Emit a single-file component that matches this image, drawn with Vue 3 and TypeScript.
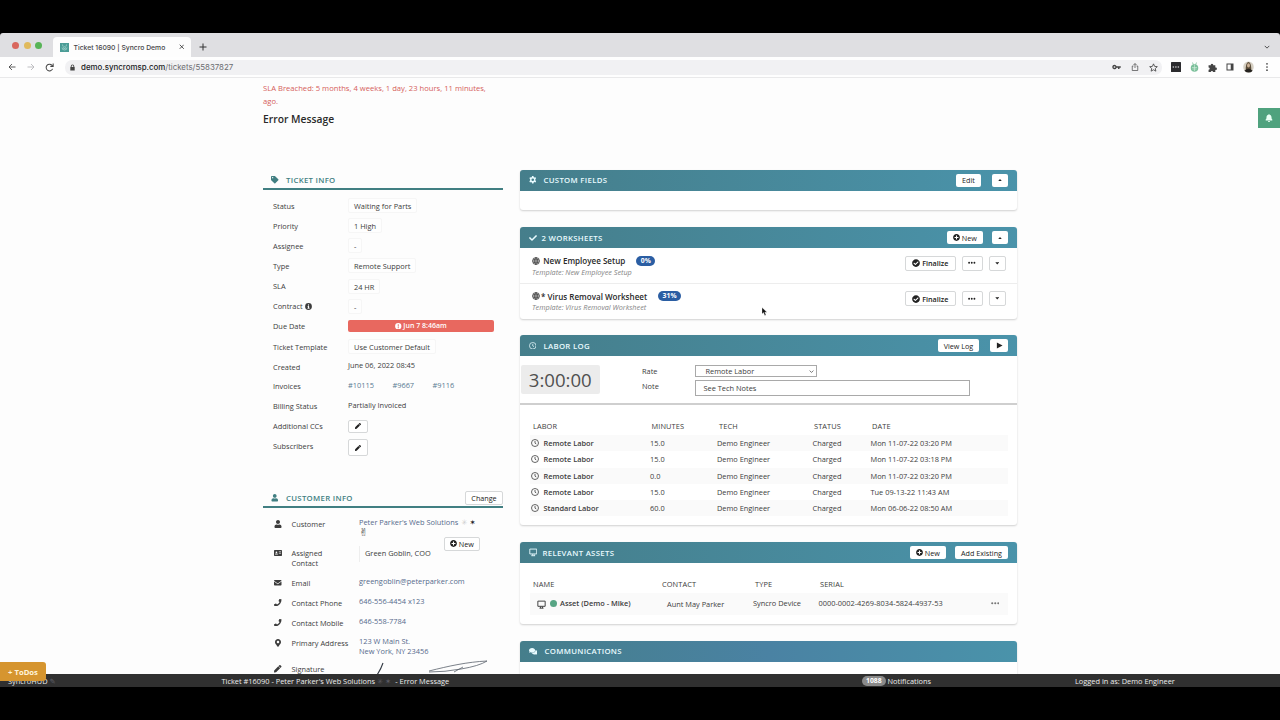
<script setup lang="ts">
import { h, type FunctionalComponent } from 'vue'

interface Glyph { box: string; d: string; line?: number }

const glyphs: Record<string, Glyph> = {
  user: { box: '0 0 448 512', d: 'M224 256c70.7 0 128-57.3 128-128S294.7 0 224 0 96 57.3 96 128s57.3 128 128 128zm89.6 32h-16.7c-22.2 10.2-46.9 16-72.9 16s-50.6-5.8-72.9-16h-16.7C60.2 288 0 348.2 0 422.4V464c0 26.5 21.5 48 48 48h352c26.5 0 48-21.5 48-48v-41.6c0-74.2-60.2-134.4-134.4-134.4z' },
  tag: { box: '0 0 512 512', d: 'M0 252V48C0 21 21 0 48 0h204a48 48 0 0 1 34 14l212 212c19 19 19 49 0 68L294 498c-19 19-49 19-68 0L14 286A48 48 0 0 1 0 252zM112 64c-27 0-48 21-48 48s21 48 48 48 48-21 48-48-21-48-48-48z' },
  check: { box: '0 0 512 512', d: 'M174 439L7 273c-10-10-10-26 0-36l37-36c10-10 26-10 36 0l112 112L432 73c10-10 26-10 36 0l36 36c10 10 10 26 0 36L210 439c-10 10-26 10-36 0z' },
  checkCircle: { box: '0 0 512 512', d: 'M504 256c0 137-111 248-248 248S8 393 8 256 119 8 256 8s248 111 248 248zM227 387l184-184c6-6 6-16 0-22l-22-23c-7-6-17-6-23 0L216 308l-70-70c-6-6-16-6-23 0l-22 23c-7 6-7 16 0 22l104 104c6 6 16 6 22 0z' },
  plusCircle: { box: '0 0 512 512', d: 'M256 8C119 8 8 119 8 256s111 248 248 248 248-111 248-248S393 8 256 8zm144 276c0 6.600-5.400 12-12 12h-92v92c0 6.600-5.400 12-12 12h-56c-6.600 0-12-5.400-12-12v-92h-92c-6.600 0-12-5.400-12-12v-56c0-6.600 5.400-12 12-12h92v-92c0-6.600 5.400-12 12-12h56c6.600 0 12 5.400 12 12v92h92c6.600 0 12 5.400 12 12v56z' },
  infoCircle: { box: '0 0 512 512', d: 'M256 8a248 248 0 1 0 0 496 248 248 0 0 0 0-496zM256 100a46 46 0 1 1 0 92 46 46 0 0 1 0-92zM190 220h110v136h32v56H184v-56h32v-80h-26z' },
  alertCircle: { box: '0 0 512 512', d: 'M256 8a248 248 0 1 0 0 496 248 248 0 0 0 0-496zM215 100h82l-12 190h-58zM256 320a45 45 0 1 1 0 90 45 45 0 0 1 0-90z' },
  card: { box: '0 0 576 512', d: 'M48 40h480q48 0 48 48v336q0 48-48 48H48q-48 0-48-48V88q0-48 48-48zM176 140a60 60 0 1 0 0 120 60 60 0 0 0 0-120zM70 370h212q0-80-60-86h-92q-60 6-60 86zM350 150v50h160v-50zM350 250v50h160v-50z' },
  envelope: { box: '0 0 512 512', d: 'M48 64h416q48 0 48 48v14L256 310 0 126v-14q0-48 48-48zM0 172l256 184 256-184v228q0 48-48 48H48q-48 0-48-48z' },
  phone: { box: '0 0 512 512', d: 'M493.400 24.600l-104-24c-11.300-2.600-22.900 3.300-27.500 13.900l-48 112c-4.200 9.800-1.400 21.300 6.900 28l60.600 49.600c-36 76.700-98.900 140.500-177.200 177.200l-49.600-60.600c-6.800-8.300-18.200-11.100-28-6.900l-112 48C3.900 366.500-2 378.100.600 389.400l24 104C27.100 504.200 36.700 512 48 512c256.100 0 464-207.500 464-464 0-11.200-7.700-20.900-18.600-23.400z' },
  pin: { box: '0 0 384 512', d: 'M172 502C27 291 0 269 0 192 0 86 86 0 192 0s192 86 192 192c0 77-27 99-172 310-10 13-30 13-40 0zM192 272c44 0 80-36 80-80s-36-80-80-80-80 36-80 80 36 80 80 80z' },
  pen: { box: '0 0 512 512', d: 'M291 93l128 128-278 278-114 13C11 514-2 501 0 485l13-114L291 93zm207-19l-60-60c-19-19-49-19-68 0l-57 57 128 128 57-57c19-19 19-49 0-68z' },
  bell: { box: '0 0 448 512', d: 'M224 512c35 0 64-29 64-64H160c0 35 29 64 64 64zm215-150c-19-20-55-52-55-154 0-78-54-140-128-155V32c0-18-14-32-32-32s-32 14-32 32v21C118 68 64 130 64 208c0 102-36 134-55 154-6 7-9 14-9 22 0 16 13 32 32 32h384c19 0 32-16 32-32 0-8-3-15-9-22z' },
  comments: { box: '0 0 576 512', d: 'M416 192c0-88.400-93.100-160-208-160S0 103.600 0 192c0 34.300 14.100 65.900 38 92-13.400 30.200-35.500 54.200-35.800 54.500-2.200 2.300-2.800 5.700-1.500 8.700S4.800 352 8 352c36.600 0 66.900-12.300 88.700-25 32.200 15.700 70.300 25 111.300 25 114.900 0 208-71.600 208-160zm122 220c23.900-26 38-57.700 38-92 0-66.900-53.500-124.200-129.300-148.100.900 6.600 1.300 13.300 1.300 20.100 0 105.900-107.700 192-240 192-10.800 0-21.300-.800-31.700-1.900C207.800 439.600 281.800 480 368 480c41 0 79.100-9.200 111.300-25 21.800 12.700 52.100 25 88.700 25 3.200 0 6.100-1.900 7.300-4.800 1.300-2.900.700-6.300-1.500-8.700-.300-.300-22.400-24.200-35.800-54.500z' },
  gear: { box: '0 0 16 16', d: 'M6.500 0h3l.5 2.200 1.600.9 2.200-.7 1.500 2.600-1.700 1.600v2.800l1.700 1.600-1.500 2.600-2.200-.7-1.600.9-.5 2.200h-3L6 13.800l-1.600-.9-2.200.7L.700 11l1.700-1.600V6.600L.700 5l1.500-2.600 2.200.7L6 2.200zM8 5.200a2.800 2.800 0 1 0 0 5.600 2.800 2.800 0 0 0 0-5.600z' },
  clock: { box: '0 0 16 16', d: 'M8 1a7 7 0 1 0 0 14A7 7 0 0 0 8 1zM8 4v4.300l2.600 1.600', line: 1.6 },
  desktop: { box: '0 0 16 16', d: 'M1.500 2h13v9.200h-13zM6.500 11.500l-.6 3M9.500 11.500l.6 3M4.500 14.500h7', line: 1.7 },
  globe: { box: '0 0 16 16', d: 'M8 1a7 7 0 1 0 0 14A7 7 0 0 0 8 1zM8 1v14M1 8h14M2 4.600h12M2 11.400h12M8 1C3.500 4.500 3.500 11.500 8 15M8 1c4.500 3.500 4.500 10.500 0 14', line: 1.3 },
  play: { box: '0 0 16 16', d: 'M2 1v14l13-7z' },
  up: { box: '0 0 16 16', d: 'M1 12h14L8 4z' },
  down: { box: '0 0 16 16', d: 'M1 4h14l-7 8z' },
  dots: { box: '0 0 16 16', d: 'M2.300 6a2 2 0 1 0 0 4 2 2 0 0 0 0-4zM8 6a2 2 0 1 0 0 4 2 2 0 0 0 0-4zM13.700 6a2 2 0 1 0 0 4 2 2 0 0 0 0-4z' },
  back: { box: '0 0 16 16', d: 'M15 8H2M8 2L2 8l6 6', line: 1.7 },
  forward: { box: '0 0 16 16', d: 'M1 8h13M8 2l6 6-6 6', line: 1.7 },
  reload: { box: '0 0 16 16', d: 'M13.500 10.500A6 6 0 1 1 12.500 4l2 2M14.500 1v5h-5', line: 1.8 },
  lock: { box: '0 0 16 16', d: 'M3 7h1V5a4 4 0 0 1 8 0v2h1v8H3zM6 7h4V5a2 2 0 0 0-4 0z' },
  close: { box: '0 0 16 16', d: 'M2 2l12 12M14 2L2 14', line: 2.4 },
  plus: { box: '0 0 16 16', d: 'M8 1v14M1 8h14', line: 2 },
  chevron: { box: '0 0 16 16', d: 'M2 5l6 6 6-6', line: 2.200 },
  key: { box: '0 0 18 12', d: 'M5 1.500a4.500 4.500 0 1 0 4.200 6H12V10h3V7.500h2.500v-3H9.200A4.500 4.500 0 0 0 5 1.500zM5 4.300a1.700 1.700 0 1 1 0 3.400 1.700 1.700 0 0 1 0-3.400z' },
  share: { box: '0 0 16 16', d: 'M5 6H2.500v9h11V6H11M8 10V1.500M5 4l3-3 3 3', line: 1.4 },
  star: { box: '0 0 16 16', d: 'M8 1.500l2 4.500 4.800.5-3.600 3.200 1 4.800L8 12l-4.200 2.500 1-4.800L1.200 6.500 6 6z', line: 1.5 },
  puzzle: { box: '0 0 16 16', d: 'M1 4h4a2.200 2.200 0 1 1 4.200 0H13v4a2.200 2.200 0 1 1 0 4.200V16H9a2 2 0 0 0-4 0H1v-4a2.100 2.100 0 1 0 0-4.200z' },
  side: { box: '0 0 16 16', d: 'M1 1h14v14H1zM3 3v10h6.500V3z' },
  kebab: { box: '0 0 16 16', d: 'M8 0a1.700 1.700 0 1 0 0 3.400A1.700 1.700 0 0 0 8 0zM8 6.300a1.700 1.700 0 1 0 0 3.400 1.700 1.700 0 0 0 0-3.400zM8 12.600a1.700 1.700 0 1 0 0 3.400 1.700 1.700 0 0 0 0-3.400z' },
}

const Icon: FunctionalComponent<{ name: string; size?: number }> = (props) => {
  const g = glyphs[props.name]
  const s = props.size ?? 8
  return h('svg', { viewBox: g.box, width: s, height: s, style: { display: 'block', flex: 'none' } }, [
    h('path', g.line
      ? { d: g.d, fill: 'none', stroke: 'currentColor', 'stroke-width': g.line }
      : { d: g.d, fill: 'currentColor', 'fill-rule': 'evenodd' }),
  ])
}
Icon.props = ['name', 'size']

interface InfoRow { label: string; value?: string; kind: 'pill' | 'text' | 'due' | 'links' | 'edit'; links?: string[]; tall?: boolean }
const ticketRows: InfoRow[] = [
  { label: 'Status', value: 'Waiting for Parts', kind: 'pill' },
  { label: 'Priority', value: '1 High', kind: 'pill' },
  { label: 'Assignee', value: '-', kind: 'pill' },
  { label: 'Type', value: 'Remote Support', kind: 'pill' },
  { label: 'SLA', value: '24 HR', kind: 'pill' },
  { label: 'Contract', value: '-', kind: 'pill' },
  { label: 'Due Date', value: 'Jun 7 8:46am', kind: 'due' },
  { label: 'Ticket Template', value: 'Use Customer Default', kind: 'pill' },
  { label: 'Created', value: 'June 06, 2022 08:45', kind: 'text' },
  { label: 'Invoices', kind: 'links', links: ['#10115', '#9667', '#9116'] },
  { label: 'Billing Status', value: 'Partially Invoiced', kind: 'text' },
  { label: 'Additional CCs', kind: 'edit' },
  { label: 'Subscribers', kind: 'edit', tall: true },
]
const contactRows = [
  { icon: 'envelope', label: 'Email', value: 'greengoblin@peterparker.com' },
  { icon: 'phone', label: 'Contact Phone', value: '646-556-4454 x123' },
  { icon: 'phone', label: 'Contact Mobile', value: '646-558-7784' },
]
const worksheets = [
  { name: 'New Employee Setup', percent: '0%', template: 'New Employee Setup' },
  { name: '* Virus Removal Worksheet', percent: '31%', template: 'Virus Removal Worksheet' },
]
const labor = [
  ['Remote Labor', '15.0', 'Mon 11-07-22 03:20 PM'],
  ['Remote Labor', '15.0', 'Mon 11-07-22 03:18 PM'],
  ['Remote Labor', '0.0', 'Mon 11-07-22 03:20 PM'],
  ['Remote Labor', '15.0', 'Tue 09-13-22 11:43 AM'],
  ['Standard Labor', '60.0', 'Mon 06-06-22 08:50 AM'],
]
</script>

<template>
  <div class="screen">
    <div class="tabs">
      <i class="light red" /><i class="light amber" /><i class="light green" />
      <div class="tab">
        <svg class="favicon" viewBox="0 0 18 18"><rect width="18" height="18" fill="#4b9c96" /><path d="M5 3l1 4M13 3l-1 4M4 9a5 5 0 1 0 10 0M6 9q3-3 6 0M7 11h4" fill="none" stroke="#a9d8d0" stroke-width="1.500" /></svg>
        <span class="tab-title">Ticket 16090 | Syncro Demo</span>
        <Icon name="close" :size="5.500" />
      </div>
      <Icon class="new-tab" name="plus" :size="8" />
      <Icon class="tab-menu" name="chevron" :size="6" />
    </div>
    <div class="toolbar">
      <Icon name="back" :size="8" />
      <Icon class="dim" name="forward" :size="8" />
      <Icon name="reload" :size="9" />
      <div class="address">
        <Icon name="lock" :size="7" />
        <span class="url">demo.syncromsp.com<em>/tickets/55837827</em></span>
        <svg class="key" viewBox="0 0 18 12" width="9" height="6"><path :d="glyphs.key.d" fill="currentColor" fill-rule="evenodd" /></svg>
        <Icon name="share" :size="8" />
        <Icon name="star" :size="9" />
      </div>
      <div class="extensions">
        <svg viewBox="0 0 18 18" width="10" height="10"><rect width="18" height="18" rx="1" fill="#2b2b2e" /><path d="M3 9h2.500M7.500 9H10M12 9h2.500" stroke="#fff" stroke-width="2.200" /></svg>
        <svg viewBox="0 0 18 20" width="9" height="10"><path d="M5 1l2 5M13 1l-2 5" stroke="#7cc09b" stroke-width="1.600" /><circle cx="9" cy="12" r="7.500" fill="#7cc09b" /><path d="M4 11h10M5 14h8M9 6v12" stroke="#d5efdf" stroke-width="1.200" /></svg>
        <Icon name="puzzle" :size="9" />
        <Icon name="side" :size="8" />
        <svg viewBox="0 0 24 26" width="11" height="12"><ellipse cx="12" cy="13" rx="11.500" ry="12" fill="#d6d0c4" /><path d="M6 24Q5 3 12 2q7 1 6 22z" fill="#5a4c38" /><ellipse cx="12" cy="9.500" rx="3.200" ry="4.500" fill="#cdb297" /><path d="M3 21q9-8 18 0-8 8-18 0z" fill="#24221f" /></svg>
        <Icon name="kebab" :size="8" />
      </div>
    </div>

    <main class="page">
      <div class="alerts"><Icon name="bell" :size="8" /></div>
      <div class="heading">
        <p class="breach">SLA Breached: 5 months, 4 weeks, 1 day, 23 hours, 11 minutes, ago.</p>
        <h1>Error Message</h1>
      </div>
      <div class="columns">
        <aside>
          <header class="side-head"><Icon name="tag" :size="7.500" /><h2>TICKET INFO</h2></header>
          <div class="ticket-rows">
            <div v-for="row in ticketRows" :key="row.label" class="info" :class="{ tall: row.tall }">
              <label>{{ row.label }}<Icon v-if="row.label === 'Contract'" name="infoCircle" :size="7" /></label>
              <span v-if="row.kind === 'pill'" class="pill-value">{{ row.value }}</span>
              <span v-else-if="row.kind === 'due'" class="due-value"><Icon name="alertCircle" :size="6.500" />{{ row.value }}</span>
              <span v-else-if="row.kind === 'text'" class="plain">{{ row.value }}</span>
              <span v-else-if="row.kind === 'links'" class="plain links"><a v-for="l in row.links" :key="l">{{ l }}</a></span>
              <button v-else class="btn outline edit"><Icon name="pen" :size="6" /></button>
            </div>
          </div>

          <header class="side-head customer-head"><Icon name="user" :size="7.500" /><h2>CUSTOMER INFO</h2><button class="btn outline change">Change</button></header>
          <div class="contact-rows">
            <div class="contact first">
              <Icon name="user" :size="8" /><label>Customer</label>
              <div class="company"><a>Peter Parker's Web Solutions</a><i class="spark">✳</i><i class="dark-spark">✶</i><br><b>✌</b></div>
            </div>
            <div class="contact assigned">
              <Icon name="card" :size="8" /><label>Assigned<br>Contact</label>
              <span class="assignee">Green Goblin, COO</span>
              <button class="btn outline add-contact"><Icon name="plusCircle" :size="7" />New</button>
            </div>
            <div v-for="c in contactRows" :key="c.label" class="contact">
              <Icon :name="c.icon" :size="7.500" /><label>{{ c.label }}</label><a>{{ c.value }}</a>
            </div>
            <div class="contact address-row">
              <Icon name="pin" :size="8" /><label>Primary Address</label><a>123 W Main St.<br>New York, NY 23456</a>
            </div>
            <div class="contact sign">
              <Icon name="pen" :size="7.500" /><label>Signature</label>
              <svg class="scrawl" viewBox="0 0 130 22" width="130" height="22"><path d="M24 7q-2 6-6 12" fill="none" stroke="#333a44" stroke-width="1.100" /><path d="M70 15C90 10 108 6 128 5q-8 5-26 8-16 3-32 3M104 11l-9 5" fill="none" stroke="#59616b" stroke-width=".8" /></svg>
            </div>
          </div>
        </aside>

        <section class="panels">
          <article class="panel custom">
            <header><Icon name="gear" :size="7.500" /><h2>CUSTOM FIELDS</h2><button class="btn w25">Edit</button><button class="btn toggle"><Icon name="up" :size="4" /></button></header>
          </article>

          <article class="panel sheets">
            <header><Icon name="check" :size="8" /><h2 class="near">2 WORKSHEETS</h2><button class="btn w36"><Icon name="plusCircle" :size="7" />New</button><button class="btn toggle short"><Icon name="up" :size="4" /></button></header>
            <div v-for="w in worksheets" :key="w.name" class="sheet">
              <div>
                <p class="sheet-name"><Icon name="globe" :size="8" /><strong :class="{ starred: w.name[0] === '*' }">{{ w.name }}</strong><span class="percent">{{ w.percent }}</span></p>
                <p class="template">Template: {{ w.template }}</p>
              </div>
              <div class="actions">
                <button class="btn outline finalize"><Icon name="checkCircle" :size="8" />Finalize</button>
                <button class="btn outline more"><Icon name="dots" :size="7.500" /></button>
                <button class="btn outline drop"><Icon name="down" :size="4.500" /></button>
              </div>
            </div>
          </article>

          <article class="panel labor">
            <header><Icon name="clock" :size="7.500" /><h2>LABOR LOG</h2><button class="btn w41">View Log</button><button class="btn play"><Icon name="play" :size="7" /></button></header>
            <div class="timer">
              <span class="elapsed">3:00:00</span>
              <div class="fields">
                <label>Rate</label><span class="select">Remote Labor<Icon name="chevron" :size="5" /></span>
                <label>Note</label><span class="input">See Tech Notes</span>
              </div>
            </div>
            <div class="table">
              <div class="tr th"><span>LABOR</span><span>MINUTES</span><span>TECH</span><span>STATUS</span><span>DATE</span></div>
              <div v-for="(l, i) in labor" :key="i" class="tr">
                <span class="name"><Icon name="clock" :size="8" />{{ l[0] }}</span><span>{{ l[1] }}</span><span>Demo Engineer</span><span>Charged</span><span>{{ l[2] }}</span>
              </div>
            </div>
          </article>

          <article class="panel assets">
            <header><Icon name="desktop" :size="8.500" /><h2 class="near-desktop">RELEVANT ASSETS</h2><button class="btn w36">
              <Icon name="plusCircle" :size="7" />New</button><button class="btn w53">Add Existing</button></header>
            <div class="asset-grid asset-head"><span>NAME</span><span>CONTACT</span><span>TYPE</span><span>SERIAL</span></div>
            <div class="asset-grid asset-row">
              <span class="asset-name"><Icon class="asset-icon" name="desktop" :size="9" /><i />Asset (Demo - Mike)</span><span class="who">Aunt May Parker</span><span>Syncro Device</span><span>0000-0002-4269-8034-5824-4937-53</span><Icon class="asset-dots" name="dots" :size="8.500" />
            </div>
          </article>

          <article class="panel comms">
            <header><Icon name="comments" :size="8.500" /><h2>COMMUNICATIONS</h2></header>
          </article>
        </section>
      </div>
      <svg class="cursor" viewBox="0 0 10 16" width="5" height="9"><path d="M0 0v13l3-3 2.500 6 2.500-1-2.500-5.500H10z" fill="#111" stroke="#fff" stroke-width=".6" /></svg>
    </main>

    <footer class="status">
      <span class="hud">SyncroHUD <i>✎</i></span>
      <span class="ticket">Ticket #16090 - Peter Parker's Web Solutions <i>✳ ✶</i><b>- Error Message</b></span>
      <span class="notes"><em>1088</em>Notifications</span>
      <span>Logged in as: Demo Engineer</span>
      <button class="todos">+ ToDos</button>
    </footer>
  </div>
</template>

<style>
html, body { margin: 0; background: #000; overflow: hidden; }
</style>

<style scoped>
* { box-sizing: border-box; }
p, h1, h2 { margin: 0; }
i, em { font-style: normal; }
.screen { width: 1280px; height: 720px; padding-top: 33px; background: #000; color: #3c3c3c; font-family: "Open Sans", "DejaVu Sans", sans-serif; font-size: 7.4px; font-weight: 500; display: flex; flex-direction: column; overflow: hidden; }

.tabs { flex: none; height: 24px; background: #dfdfe2; display: flex; align-items: center; padding: 0 10px 0 12px; color: #333; border-radius: 3px 3px 0 0; }
.light { width: 7px; height: 7px; border-radius: 50%; margin-right: 4.5px; }
.red { background: #d9675d; } .amber { background: #e0ba5c; } .green { background: #58b456; }
.tab { align-self: flex-end; width: 138px; height: 20px; margin-left: 6.5px; background: #fdfdfd; border-radius: 4px 4px 0 0; display: flex; align-items: center; padding: 0 7px 0 7px; }
.favicon { width: 9px; height: 9px; margin-right: 4.5px; }
.tab-title { flex: 1; font: 500 6.8px Inter, sans-serif; color: #454548; white-space: nowrap; }
.new-tab { margin-left: 8px; margin-top: 4px; }
.tab-menu { margin-left: auto; margin-top: 4px; }
.toolbar { flex: none; height: 21px; background: #fefefe; border-bottom: 1px solid #e9e9ea; display: flex; align-items: center; gap: 10.5px; padding: 0 9px 0 8px; color: #444; }
.dim { color: #b5b5b8; }
.address { flex: 1; height: 15px; border-radius: 7px; background: #f1f1f3; display: flex; align-items: center; padding: 0 4px 0 4px; gap: 10px; }
.url { flex: 1; margin-left: -4.500px; font: 500 7.9px Inter, sans-serif; color: #202124; }
.url em { color: #6b6c70; font-weight: 400; }
.extensions { display: flex; align-items: center; gap: 9px; margin-left: -1px; }

.page { flex: none; position: relative; height: 596px; background: #fdfdfd; overflow: hidden; padding: 4px 263px 0; }
.alerts { position: absolute; right: 0; top: 30px; width: 22px; height: 20px; background: #4fa27e; color: #eafff5; display: flex; align-items: center; justify-content: center; }
.heading { height: 88px; }
.breach { width: 235px; line-height: 12.7px; font-size: 7.64px; color: #d5605b; }
h1 { font-size: 10.300px; line-height: 16px; margin-top: 4px; font-weight: 600; color: #2a2a2a; }
.columns { display: grid; grid-template-columns: 240px 497px; gap: 17px; }
h2 { font-size: 7.800px; font-weight: 600; letter-spacing: .3px; white-space: nowrap; }

.side-head { height: 20px; border-bottom: 2px solid #417f82; color: #417f82; display: flex; align-items: center; padding: 2px 0 0 8px; gap: 7.500px; }
.ticket-rows { padding: 5.500px 9px 0 10px; height: 298px; }
.info { height: 20.150px; display: grid; grid-template-columns: 75px 146px; align-items: center; }
.info:nth-child(n+9) { height: 19.850px; }
.info label { display: flex; align-items: center; gap: 2px; font-weight: 500; }
.pill-value { justify-self: start; height: 15px; line-height: 14px; padding: 0 5px; border: 1px solid #f6f6f6; border-radius: 2px; background: #fefefe; }
.due-value { height: 12px; background: #e8685f; color: #fff; border-radius: 2px; display: flex; align-items: center; justify-content: center; gap: 1.500px; font-weight: 600; font-size: 7px; margin-top: -1px; }
.plain { margin-top: -3px; }
.links { display: flex; gap: 18.500px; color: #587a92; }
.edit { width: 20px; height: 13px; }
.tall .edit { height: 17px; margin-top: 3px; }

.btn { font: 500 7.200px "Open Sans", sans-serif; height: 13px; border: 0; border-radius: 2px; background: #fff; color: #222; display: flex; align-items: center; justify-content: center; padding: 0; gap: 1.500px; white-space: nowrap; }
.outline { border: 1px solid #d6d8d9; }
.change { width: 38px; height: 14px; margin-left: auto; }
.contact-rows { padding-top: 5.600px; }
.contact { display: grid; grid-template-columns: 17.500px 67.500px 1fr; padding-left: 11px; height: 20px; line-height: 10.600px; }
.contact > svg { margin-top: 6px; }
.contact label { padding-top: 5px; white-space: nowrap; }
.contact > a { padding-top: 3px; }
.contact a { color: #566a8c; }
.contact.first { height: 29px; }
.company { padding-top: 3px; white-space: nowrap; }
.company b { display: inline-block; font-size: 11px; line-height: 10px; color: #333; }
.spark { color: #ccc; margin-left: 3px; } .dark-spark { color: #222; margin-left: 2px; }
.assigned { position: relative; height: 30px; }
.assignee { margin-top: 3px; height: 16px; line-height: 14px; padding-left: 5px; border-left: 1px solid #eee; }
.add-contact { position: absolute; left: 181px; top: -6px; width: 36px; height: 14px; }
.address-row { height: 26.500px; }
.contact > .scrawl { margin-top: -3px; }

.panels { display: flex; flex-direction: column; }
.panel { background: #fff; border-radius: 3px; box-shadow: 0 1px 2px #0000002e; margin-bottom: 17px; }
.panel > header { height: 21px; border-radius: 3px 3px 0 0; background: linear-gradient(90deg, #457e8b, #4a93aa); color: #e9fbff; display: flex; align-items: center; padding: 0 9px 0 8.500px; }
.panel h2 { margin-left: 7.500px; margin-right: auto; }
.panel h2.near { margin-left: 5px; }
.panel h2.near-desktop { margin-left: 5.500px; }
.w25 { width: 25px; } .w36 { width: 36px; } .w41 { width: 41px; } .w53 { width: 53px; }
.toggle { width: 16px; margin-left: 11px; }
.short { margin-left: 9px; }
.play { width: 18px; margin-left: 11px; }
.w53 { margin-left: 9px; }
.custom { height: 40px; }
.custom > header { padding-bottom: 1px; }
.sheets { height: 92px; margin-bottom: 16px; }
.sheet { height: 35.500px; display: flex; justify-content: space-between; padding: 6.500px 11.500px 0 12px; border-bottom: 1px solid #ededed; }
.sheet:last-child { border: 0; }
.sheet-name { display: flex; align-items: center; height: 12px; font-size: 8.050px; color: #2a2a2a; }
.sheet-name strong { font-weight: 600; margin-left: 3.300px; }
.sheet-name .starred { margin-left: 1px; }
.percent { margin-left: 11px; background: #2b5ea3; color: #fff; border-radius: 6px; height: 10px; line-height: 10px; padding: 0 4.500px; font-size: 6.800px; font-weight: 700; }
.template { font-style: italic; color: #858585; font-size: 7.250px; line-height: 11px; font-weight: 400; }
.actions { display: flex; gap: 6px; padding-top: 1px; }
.actions .btn { height: 15px; }
.finalize { width: 51px; font-weight: 600; gap: 2.500px; }
.more { width: 21px; } .drop { width: 17px; }
.labor { height: 190px; }
.timer { height: 49px; border-bottom: 2px solid #cfcfcf; display: flex; padding: 9px 0 0 1px; }
.elapsed { width: 78.500px; height: 29px; background: #ececec; color: #505050; font-size: 18.600px; line-height: 29px; font-weight: 400; text-align: center; border-radius: 2px; }
.fields { margin-left: 42.500px; display: grid; grid-template-columns: 52.500px 275px; grid-template-rows: 12px 16px; row-gap: 3px; }
.fields label { line-height: 12px; }
.select { width: 122px; border: 1px solid #a9a9a9; line-height: 11px; padding: 0 2px 0 10px; display: flex; justify-content: space-between; align-items: center; }
.input { border: 1px solid #a9a9a9; line-height: 15px; padding-left: 8px; }
.table { padding: 11.500px 9px 0 10px; }
.tr { display: grid; grid-template-columns: 120px 67px 95.500px 58px 1fr; height: 16.250px; align-items: center; }
.tr:nth-child(even) { background: #fafafa; }
.th { height: 18.500px; padding-left: 3px; grid-template-columns: 118.500px 67.500px 95px 58px 1fr; letter-spacing: .1px; }
.name { display: flex; align-items: center; gap: 4.500px; padding-left: 1px; font-weight: 600; }
.assets { height: 82px; }
.asset-grid { display: grid; grid-template-columns: 129px 93px 65px 1fr; align-items: center; }
.asset-head { height: 18px; margin: 12.400px 9px 0 13px; letter-spacing: .1px; }
.asset-row { grid-template-columns: 130px 93px 65.500px 1fr auto; height: 21.600px; background: #fafafa; margin: 0 9px 0 10px; padding: 0 9px 3px 0; }
.asset-name { display: flex; align-items: center; padding: 1px 0 0 6.500px; font-weight: 600; }
.asset-icon { margin-top: 2px; }
.asset-name i { width: 7px; height: 7px; border-radius: 50%; background: #57a584; margin: 0 3px 0 4.500px; }
.asset-dots { color: #777; margin-top: 1px; }
.who { padding: 2px 0 0 7px; }
.comms { height: 60px; margin: 0; }
.comms > header { height: 20.500px; background: linear-gradient(90deg, #457e8b, #4a82a3 50%, #4a93aa); }
.cursor { position: absolute; left: 761.500px; top: 229px; }

.status { flex: none; position: relative; height: 13px; background: #303030; color: #ededed; display: grid; grid-template-columns: 213.500px 640.500px 213px 1fr; align-items: center; padding-left: 8px; white-space: nowrap; }
.ticket i, .hud i { color: #5b5b64; } .ticket b { font-weight: 500; margin-left: 4px; }
.notes { display: flex; align-items: center; gap: 2px; }
.notes em { background: #8a8a8a; color: #fff; border-radius: 5px; font-weight: 700; font-size: 6.800px; line-height: 10px; padding: 0 4px; }
.todos { position: absolute; left: 0; top: -12px; width: 46px; height: 19px; border: 0; border-radius: 0 3px 3px 0; background: #d6952f; color: #fff3d9; font: 700 7.700px "Open Sans", sans-serif; padding: 0; }
</style>
